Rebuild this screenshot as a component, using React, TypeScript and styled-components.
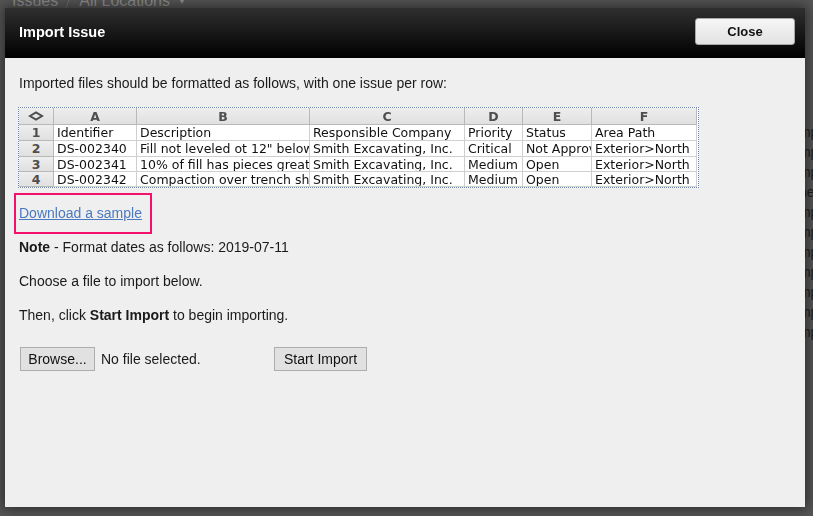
import React from "react";
import styled, { createGlobalStyle } from "styled-components";

const GlobalStyle = createGlobalStyle`
  html, body { margin: 0; padding: 0; }
  body {
    background: #565656;
    font-family: "Liberation Sans", Arial, sans-serif;
    overflow: hidden;
  }
`;

const Page = styled.div`
  width: 813px;
  height: 516px;
  overflow: hidden;
  background: #565656;
`;

const TopBar = styled.div`
  display: flex;
  align-items: center;
  gap: 10px;
  margin-top: -9px;
  padding-left: 12px;
  height: 20px;
  font-size: 16px;
  color: #8e8e8e;
`;

const Sep = styled.span`
  width: 1px;
  height: 22px;
  background: #707070;
  transform: skewX(-20deg);
`;

const Caret = styled.span`
  font-size: 8px;
  margin-left: 8px;
  vertical-align: middle;
`;

const BgRows = styled.div`
  display: flex;
  flex-direction: column;
  padding: 111px 0 0 795px;
`;

const BgRow = styled.div`
  height: 20px;
  line-height: 20px;
  font-size: 14px;
  color: #202020;
  white-space: nowrap;
`;

const Modal = styled.div`
  position: fixed;
  left: 5px;
  top: 8px;
  width: 800px;
  height: 499px;
  background: #efefef;
  box-shadow: 0 0 12px 2px rgba(0, 0, 0, 0.5);
  display: flex;
  flex-direction: column;
`;

const Header = styled.div`
  height: 50px;
  flex: none;
  display: flex;
  align-items: center;
  justify-content: space-between;
  padding: 0 10px 3px 14px;
  box-sizing: border-box;
  background: linear-gradient(#2f2f2f, #000000);
`;

const Title = styled.h1`
  margin: 0;
  font-size: 14.5px;
  font-weight: bold;
  color: #ffffff;
`;

const CloseButton = styled.button`
  width: 100px;
  height: 27px;
  border: 1px solid #a8a8a8;
  border-radius: 3px;
  background: linear-gradient(#f6f6f6, #e2e2e2);
  font-family: "Liberation Sans", Arial, sans-serif;
  font-size: 13px;
  font-weight: bold;
  color: #111;
  padding: 0;
`;

const Body = styled.div`
  padding: 17px 14px 0 14px;
  font-size: 14px;
  line-height: 16px;
  color: #1a1a1a;
`;

const Para = styled.p<{ $mt?: number }>`
  margin: ${(p) => p.$mt ?? 0}px 0 0 0;
`;

const Sheet = styled.div`
  margin-top: 16px;
  margin-left: -1px;
  width: 679px;
  border: 1px dotted #6f84a6;
  display: grid;
  grid-template-columns: 35px 83px 173px 155px 58px 69px 105px;
  grid-template-rows: 17px 16px 16px 15px 15px;
  background: #ffffff;
  font-family: "DejaVu Sans", Verdana, sans-serif;
  font-size: 12.5px;
`;

const HeadCell = styled.div`
  background: linear-gradient(#eeeeee, #e0e0e0);
  border-right: 1px solid #b9b9b9;
  border-bottom: 1px solid #b9b9b9;
  box-sizing: border-box;
  display: flex;
  align-items: center;
  justify-content: center;
  font-weight: bold;
  color: #4e4e4e;
  line-height: 15px;
`;

const Cell = styled.div`
  border-right: 1px solid #cfcfcf;
  border-bottom: 1px solid #cfcfcf;
  box-sizing: border-box;
  padding-left: 3px;
  white-space: nowrap;
  overflow: hidden;
  line-height: 15px;
  color: #111;
`;

const Highlight = styled.div`
  display: inline-block;
  margin: 5px 0 0 -5px;
  border: 2px solid #f4116c;
  padding: 10px 8px 11px 3px;
`;

const SampleLink = styled.a`
  color: #4a79c0;
  text-decoration: underline;
  font-size: 14px;
`;

const Controls = styled.div`
  display: flex;
  align-items: center;
  margin-top: 24px;
  margin-left: 1px;
`;

const FilePicker = styled.div`
  width: 254px;
  display: flex;
  align-items: center;
  gap: 6px;
`;

const PlainButton = styled.button<{ $w: number }>`
  width: ${(p) => p.$w}px;
  height: 24px;
  border: 1px solid #adadad;
  background: #e1e1e1;
  font-family: "Liberation Sans", Arial, sans-serif;
  font-size: 14px;
  color: #111;
  padding: 0;
`;

const Diamond = () => (
  <svg width="16" height="10" viewBox="0 0 16 10">
    <polygon points="2,5 8,1.5 14,5 8,8.5" fill="none" stroke="#4e4e4e" strokeWidth="2" />
  </svg>
);

const cols = ["A", "B", "C", "D", "E", "F"];
const rows = [
  ["Identifier", "Description", "Responsible Company", "Priority", "Status", "Area Path"],
  ["DS-002340", 'Fill not leveled ot 12" below', "Smith Excavating, Inc.", "Critical", "Not Approved", "Exterior>North"],
  ["DS-002341", "10% of fill has pieces greater", "Smith Excavating, Inc.", "Medium", "Open", "Exterior>North"],
  ["DS-002342", "Compaction over trench should", "Smith Excavating, Inc.", "Medium", "Open", "Exterior>North"],
];

const bgWords = ["Import", "Import", "Import", "Inexact", "Import", "Import", "Import", "Import", "Import", "Import", "Import"];

export default function App() {
  return (
    <>
      <GlobalStyle />
      <Page>
        <TopBar>
          <span>Issues</span>
          <Sep />
          <span>
            All Locations<Caret>▼</Caret>
          </span>
        </TopBar>
        <BgRows>
          {bgWords.map((w, i) => (
            <BgRow key={i}>{w}</BgRow>
          ))}
        </BgRows>
      </Page>
      <Modal>
        <Header>
          <Title>Import Issue</Title>
          <CloseButton>Close</CloseButton>
        </Header>
        <Body>
          <Para>Imported files should be formatted as follows, with one issue per row:</Para>
          <Sheet>
            <HeadCell>
              <Diamond />
            </HeadCell>
            {cols.map((c) => (
              <HeadCell key={c}>{c}</HeadCell>
            ))}
            {rows.map((r, i) => (
              <React.Fragment key={i}>
                <HeadCell>{i + 1}</HeadCell>
                {r.map((v, j) => (
                  <Cell key={j}>{v}</Cell>
                ))}
              </React.Fragment>
            ))}
          </Sheet>
          <Highlight>
            <SampleLink href="#">Download a sample</SampleLink>
          </Highlight>
          <Para $mt={5}>
            <b>Note</b> - Format dates as follows: 2019-07-11
          </Para>
          <Para $mt={18}>Choose a file to import below.</Para>
          <Para $mt={18}>
            Then, click <b>Start Import</b> to begin importing.
          </Para>
          <Controls>
            <FilePicker>
              <PlainButton $w={75}>Browse...</PlainButton>
              <span>No file selected.</span>
            </FilePicker>
            <PlainButton $w={93}>Start Import</PlainButton>
          </Controls>
        </Body>
      </Modal>
    </>
  );
}
